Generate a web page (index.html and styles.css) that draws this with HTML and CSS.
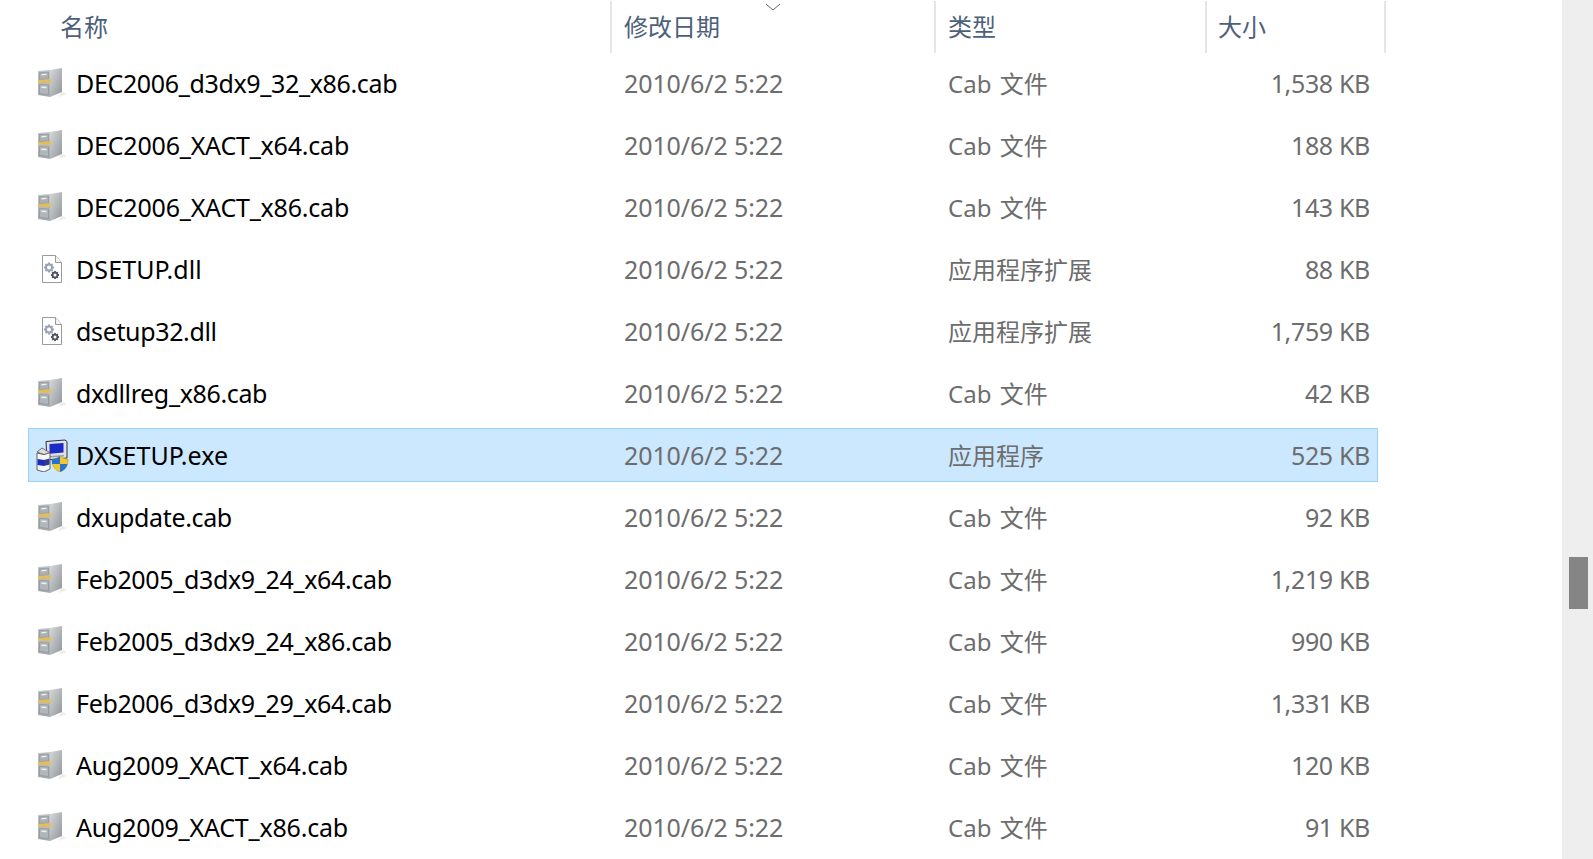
FILE: index.html
```html
<!DOCTYPE html>
<html lang="zh-CN">
<head>
    <meta charset="UTF-8">
    <meta name="viewport" content="width=device-width, initial-scale=1.0">
    <title>文件列表</title>
    <link rel="stylesheet" href="styles.css">
</head>
<body>

    <svg class="icon-defs" width="0" height="0">
        <defs>
            <linearGradient id="cabFront" x1="0" y1="0" x2="0" y2="1">
                <stop offset="0" stop-color="#c4c9cc"/>
                <stop offset="1" stop-color="#a3aaae"/>
            </linearGradient>
            <linearGradient id="cabSide" x1="0" y1="0" x2="1" y2="1">
                <stop offset="0" stop-color="#d6d9da"/>
                <stop offset="1" stop-color="#8f9598"/>
            </linearGradient>
            <symbol id="cab" viewBox="0 0 32 32">
                <path d="M26 25l5 2-9 3z" fill="#ececec"/>
                <path d="M14 3l12-2v24l-12 5z" fill="url(#cabSide)"/>
                <path d="M2 4l12-1v27L2 28z" fill="url(#cabFront)"/>
                <path d="M3.500 5.500l9-.500v7l-9 .500z" fill="#aab0b4" stroke="#878e92" stroke-width=".6"/>
                <path d="M5.500 7l5-.300v1.400l-5 .300z" fill="#eef0f1"/>
                <path d="M2 13l12-.800v3.800L2 15.500z" fill="#e6bd55"/>
                <path d="M14 12.200l3-.400v1.500l-3 2.700z" fill="#d8c48a"/>
                <path d="M3.500 17.500l9 .500v9.500l-9-1z" fill="#b0b6ba" stroke="#878e92" stroke-width=".6"/>
                <path d="M5.500 19.500l5 .300v1.400l-5-.300z" fill="#eef0f1"/>
            </symbol>
            <symbol id="dll" viewBox="0 0 32 32">
                <path d="M6.500 2.500h13l6 7v20h-19z" fill="#fff" stroke="#9a9a9a"/>
                <path d="M19.500 2.500v7h6" fill="#f2f2f2" stroke="#9a9a9a"/>
                <g fill="none" stroke="#9aa4b4" stroke-width="2">
                    <circle cx="13" cy="14.500" r="3"/>
                    <path d="M13 9.500v2M13 17.500v2M8 14.500h2M16 14.500h2M9.500 11l1.400 1.400M15.100 16.600l1.400 1.400M9.500 18l1.400-1.400M15.100 12.400l1.400-1.400"/>
                </g>
                <g fill="none" stroke="#4f5660" stroke-width="1.800">
                    <circle cx="19" cy="22" r="2.400"/>
                    <path d="M19 18v1.600M19 24.400V26M15 22h1.600M21.400 22H23M16.200 19.200l1.100 1.100M20.700 23.700l1.100 1.100M16.200 24.800l1.100-1.100M20.700 20.300l1.100-1.100"/>
                </g>
            </symbol>
            <symbol id="setup" viewBox="0 0 34 34">
                <path d="M10 3.500L29 2l2 1.500V20l-20 2z" fill="#dfe2e6" stroke="#2f2f3a"/>
                <path d="M13.500 6l14-1v9.500l-14 1.200z" fill="#1b2bc8"/>
                <path d="M14 18l14-1v1.500l-14 1z" fill="#9a9ea5"/>
                <path d="M1 15l7 1.500 6-2V31l-6 3-7-2z" fill="#f6f6f6" stroke="#3f3f4a" stroke-width=".8"/>
                <path d="M1.500 21l6.500 1v6l-6.500-1z" fill="#1b2ac0"/>
                <path d="M8 22l5.500-1.500v6L8 28z" fill="#2c3a8a"/>
                <path d="M1 14l5-4 5 3 3 1.500-6 2z" fill="#dcdee1" stroke="#55555c" stroke-width=".8"/>
                <path d="M24 34c-5-2-8-5-8-13 3 0 6-1 8-3 2 2 5 3 8 3 0 8-3 11-8 13z" fill="#f0c92c" stroke="#b88f14" stroke-width=".5"/>
                <path d="M24 18v8h-8c-.2-1.500 0-3.300 0-5 3 0 6-1 8-3z" fill="#2a72d0"/>
                <path d="M24 26h7.500c-1 4-3.500 6.500-7.500 8z" fill="#2a72d0"/>
            </symbol>
        </defs>
    </svg>

    <div class="window">
        <div class="files">
            <div class="header">
                <div class="col-head col-name">名称</div>
                <div class="col-head col-date">修改日期
                    <svg class="sort-arrow" width="16" height="8" viewBox="0 0 16 8"><path d="M1 1l7 6 7-6" fill="none" stroke="#5f6368"/></svg>
                </div>
                <div class="col-head col-type">类型</div>
                <div class="col-head col-size">大小</div>
            </div>

            <div class="row">
                <svg class="file-icon"><use href="#cab"/></svg>
                <div class="name">DEC2006_d3dx9_32_x86.cab</div>
                <div class="date">2010/6/2 5:22</div>
                <div class="type">Cab 文件</div>
                <div class="size">1,538 KB</div>
            </div>
            <div class="row">
                <svg class="file-icon"><use href="#cab"/></svg>
                <div class="name xact">DEC2006_XACT_x64.cab</div>
                <div class="date">2010/6/2 5:22</div>
                <div class="type">Cab 文件</div>
                <div class="size">188 KB</div>
            </div>
            <div class="row">
                <svg class="file-icon"><use href="#cab"/></svg>
                <div class="name xact">DEC2006_XACT_x86.cab</div>
                <div class="date">2010/6/2 5:22</div>
                <div class="type">Cab 文件</div>
                <div class="size">143 KB</div>
            </div>
            <div class="row">
                <svg class="file-icon"><use href="#dll"/></svg>
                <div class="name caps">DSETUP.dll</div>
                <div class="date">2010/6/2 5:22</div>
                <div class="type">应用程序扩展</div>
                <div class="size">88 KB</div>
            </div>
            <div class="row">
                <svg class="file-icon"><use href="#dll"/></svg>
                <div class="name">dsetup32.dll</div>
                <div class="date">2010/6/2 5:22</div>
                <div class="type">应用程序扩展</div>
                <div class="size">1,759 KB</div>
            </div>
            <div class="row">
                <svg class="file-icon"><use href="#cab"/></svg>
                <div class="name">dxdllreg_x86.cab</div>
                <div class="date">2010/6/2 5:22</div>
                <div class="type">Cab 文件</div>
                <div class="size">42 KB</div>
            </div>
            <div class="row selected">
                <svg class="file-icon setup-icon"><use href="#setup"/></svg>
                <div class="name caps">DXSETUP.exe</div>
                <div class="date">2010/6/2 5:22</div>
                <div class="type">应用程序</div>
                <div class="size">525 KB</div>
            </div>
            <div class="row">
                <svg class="file-icon"><use href="#cab"/></svg>
                <div class="name">dxupdate.cab</div>
                <div class="date">2010/6/2 5:22</div>
                <div class="type">Cab 文件</div>
                <div class="size">92 KB</div>
            </div>
            <div class="row">
                <svg class="file-icon"><use href="#cab"/></svg>
                <div class="name">Feb2005_d3dx9_24_x64.cab</div>
                <div class="date">2010/6/2 5:22</div>
                <div class="type">Cab 文件</div>
                <div class="size">1,219 KB</div>
            </div>
            <div class="row">
                <svg class="file-icon"><use href="#cab"/></svg>
                <div class="name">Feb2005_d3dx9_24_x86.cab</div>
                <div class="date">2010/6/2 5:22</div>
                <div class="type">Cab 文件</div>
                <div class="size">990 KB</div>
            </div>
            <div class="row">
                <svg class="file-icon"><use href="#cab"/></svg>
                <div class="name">Feb2006_d3dx9_29_x64.cab</div>
                <div class="date">2010/6/2 5:22</div>
                <div class="type">Cab 文件</div>
                <div class="size">1,331 KB</div>
            </div>
            <div class="row">
                <svg class="file-icon"><use href="#cab"/></svg>
                <div class="name xact">Aug2009_XACT_x64.cab</div>
                <div class="date">2010/6/2 5:22</div>
                <div class="type">Cab 文件</div>
                <div class="size">120 KB</div>
            </div>
            <div class="row">
                <svg class="file-icon"><use href="#cab"/></svg>
                <div class="name xact">Aug2009_XACT_x86.cab</div>
                <div class="date">2010/6/2 5:22</div>
                <div class="type">Cab 文件</div>
                <div class="size">91 KB</div>
            </div>
        </div>

        <div class="scrollbar">
            <div class="thumb"></div>
        </div>
    </div>

</body>
</html>
```

FILE: styles.css
```css
* {
    box-sizing: border-box;
}

html, body {
    height: 100%;
    margin: 0;
    overflow: hidden;
}

body {
    font-family: "Noto Sans", "Noto Sans CJK SC", sans-serif;
    font-size: 25px;
    background-color: #fff;
}

.icon-defs {
    display: block;
}

.window {
    display: flex;
    height: 859px;
}

.files {
    flex: 1;
    padding-top: 1px;
    padding-left: 28px;
}

/* Column header */
.header {
    display: grid;
    grid-template-columns: 584px 324px 271px 179px;
    height: 52px;
    margin-bottom: 3px;
}

.col-head {
    position: relative;
    color: #4c607a;
    font-size: 24px;
    line-height: 52px;
    padding-left: 12px;
    border-right: 2px solid #e5e5e5;
}

.col-name {
    padding-left: 32px;
}

.col-size {
    padding-left: 11px;
}

.sort-arrow {
    position: absolute;
    left: 153px;
    top: 2px;
}

/* File rows */
.row {
    display: grid;
    grid-template-columns: 47px 536px 324px 271px 163px;
    align-items: center;
    width: 1350px;
    height: 54px;
    margin-bottom: 8px;
    border: 1px solid transparent;
    color: #6d6d6d;
}

.row.selected {
    background-color: #cce8ff;
    border-color: #99d1ff;
}

.file-icon {
    width: 32px;
    height: 32px;
    margin-left: 7px;
}

.setup-icon {
    width: 34px;
    height: 34px;
}

.name {
    color: #000;
    white-space: nowrap;
    letter-spacing: -0.35px;
    margin-top: -1px;
}

.name.xact {
    letter-spacing: -0.2px;
}

.name.caps {
    letter-spacing: 0.1px;
}

.date {
    padding-left: 12px;
    letter-spacing: -0.1px;
    margin-top: -1px;
}

.type {
    padding-left: 12px;
    font-size: 24px;
    word-spacing: 2px;
    margin-top: -2px;
}

.size {
    text-align: right;
    letter-spacing: -0.35px;
    margin-top: -1px;
}

/* Scrollbar */
.scrollbar {
    width: 31px;
    padding: 557px 5px 0 7px;
    background-color: #eee;
}

.thumb {
    height: 52px;
    background-color: #858585;
}
```
